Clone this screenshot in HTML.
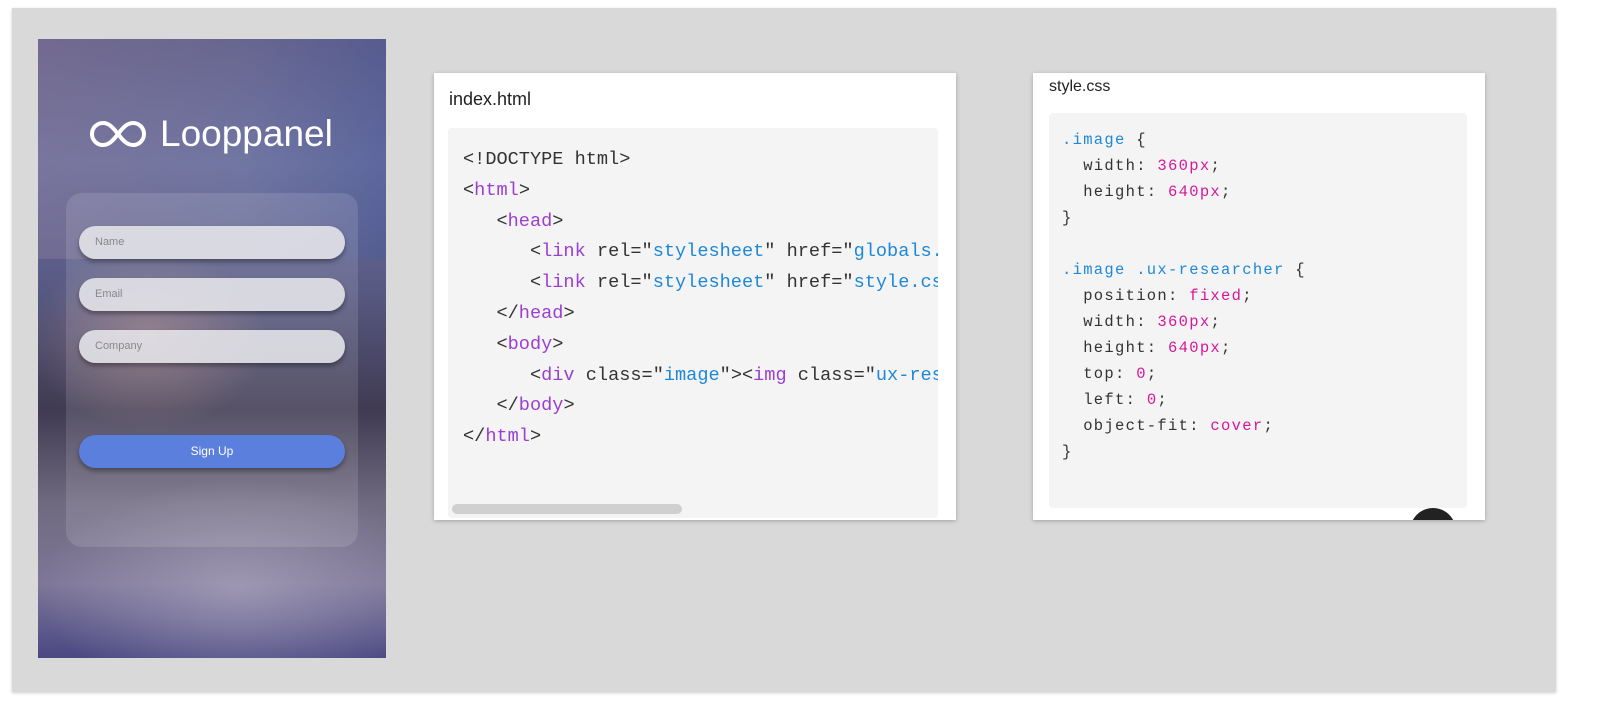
<!DOCTYPE html>
<html><head><style>
*{margin:0;padding:0;box-sizing:border-box}
body{width:1600px;height:720px;background:#fff;position:relative;overflow:hidden;font-family:"Liberation Sans",sans-serif}
.bg{position:absolute;left:12px;top:8px;width:1544px;height:684px;background:#d9d9d9;box-shadow:0 1px 3px rgba(0,0,0,.2)}
.phone{position:absolute;left:38px;top:39px;width:348px;height:619px;overflow:hidden;
background:
radial-gradient(ellipse 120px 90px at 110px 300px,rgba(200,150,140,.45),transparent),
radial-gradient(ellipse 200px 110px at 200px 550px,rgba(190,185,205,.5),transparent),
linear-gradient(180deg,#5f5c86 0%,#6a6f9c 20%,#585a84 40%,#403b52 60%,#706a80 75%,#7d7698 88%,#4a4882 100%)}
.ptop{position:absolute;left:0;top:0;width:348px;height:220px;background:linear-gradient(90deg,rgba(150,130,160,.35),rgba(150,160,200,.15) 60%,rgba(70,90,160,.35))}
.logo{position:absolute;left:50px;top:74px;color:#fff;font-size:37px;display:flex;align-items:center;gap:12px}
.glass{position:absolute;left:28px;top:154px;width:292px;height:354px;border-radius:16px;background:rgba(255,255,255,.12)}
.inp{position:absolute;left:41px;width:266px;height:33px;border-radius:17px;background:rgba(230,230,235,.88);box-shadow:0 3px 5px rgba(0,0,0,.35);font-size:11px;color:#888;padding:10px 0 0 16px}
.btn{position:absolute;left:41px;top:396px;width:266px;height:33px;border-radius:17px;background:#5b7fdc;box-shadow:0 3px 5px rgba(0,0,0,.35);color:#fff;font-size:12px;text-align:center;line-height:33px}
.card{position:absolute;top:73px;height:447px;background:#fff;box-shadow:0 1px 4px rgba(0,0,0,.25);overflow:hidden}
.title{position:absolute;font-size:18px;color:#222}
.code{position:absolute;background:#f4f4f4;border-radius:4px;overflow:hidden;font-family:"Liberation Mono",monospace;color:#333;white-space:pre}
.t{color:#9a3fd0}.s{color:#1e88d6}.v{color:#d6179a}
</style></head><body>
<div class="bg"></div>
<div class="phone"><div class="ptop"></div>
<div class="logo"><svg width="60" height="32" viewBox="0 0 60 32"><path d="M30 16c-6-8-10-11-15-11a11 11 0 0 0 0 22c5 0 9-3 15-11c6-8 10-11 15-11a11 11 0 0 1 0 22c-5 0-9-3-15-11z" fill="none" stroke="#fff" stroke-width="4"/></svg><span>Looppanel</span></div>
<div class="glass"></div>
<div class="inp" style="top:187px">Name</div>
<div class="inp" style="top:239px">Email</div>
<div class="inp" style="top:291px">Company</div>
<div class="btn">Sign Up</div>
</div>
<div class="card" style="left:434px;width:522px">
<div class="title" style="left:15px;top:16px">index.html</div>
<div class="code" style="left:14px;top:55px;width:490px;height:390px;font-size:18.6px;line-height:30.8px;padding:17px 0 0 15px">&lt;!DOCTYPE html&gt;
&lt;<span class="t">html</span>&gt;
   &lt;<span class="t">head</span>&gt;
      &lt;<span class="t">link</span> rel="<span class="s">stylesheet</span>" href="<span class="s">globals.css</span>"&gt;
      &lt;<span class="t">link</span> rel="<span class="s">stylesheet</span>" href="<span class="s">style.css</span>"&gt;
   &lt;/<span class="t">head</span>&gt;
   &lt;<span class="t">body</span>&gt;
      &lt;<span class="t">div</span> class="<span class="s">image</span>"&gt;&lt;<span class="t">img</span> class="<span class="s">ux-researcher</span>"&gt;
   &lt;/<span class="t">body</span>&gt;
&lt;/<span class="t">html</span>&gt;</div>
<div style="position:absolute;left:18px;top:431px;width:230px;height:10px;border-radius:5px;background:#d0d0d0"></div>
</div>
<div class="card" style="left:1033px;width:452px">
<div class="title" style="left:16px;top:5px;font-size:16px">style.css</div>
<div class="code" style="left:16px;top:40px;width:418px;height:395px;font-size:15.5px;letter-spacing:1.3px;line-height:26px;padding:14px 0 0 13px"><span class="s">.image</span> {
  width: <span class="v">360px</span>;
  height: <span class="v">640px</span>;
}

<span class="s">.image .ux-researcher</span> {
  position: <span class="v">fixed</span>;
  width: <span class="v">360px</span>;
  height: <span class="v">640px</span>;
  top: <span class="v">0</span>;
  left: <span class="v">0</span>;
  object-fit: <span class="v">cover</span>;
}</div>
<div style="position:absolute;left:377px;top:435px;width:46px;height:46px;border-radius:50%;background:#222"></div>
</div>
</body></html>
